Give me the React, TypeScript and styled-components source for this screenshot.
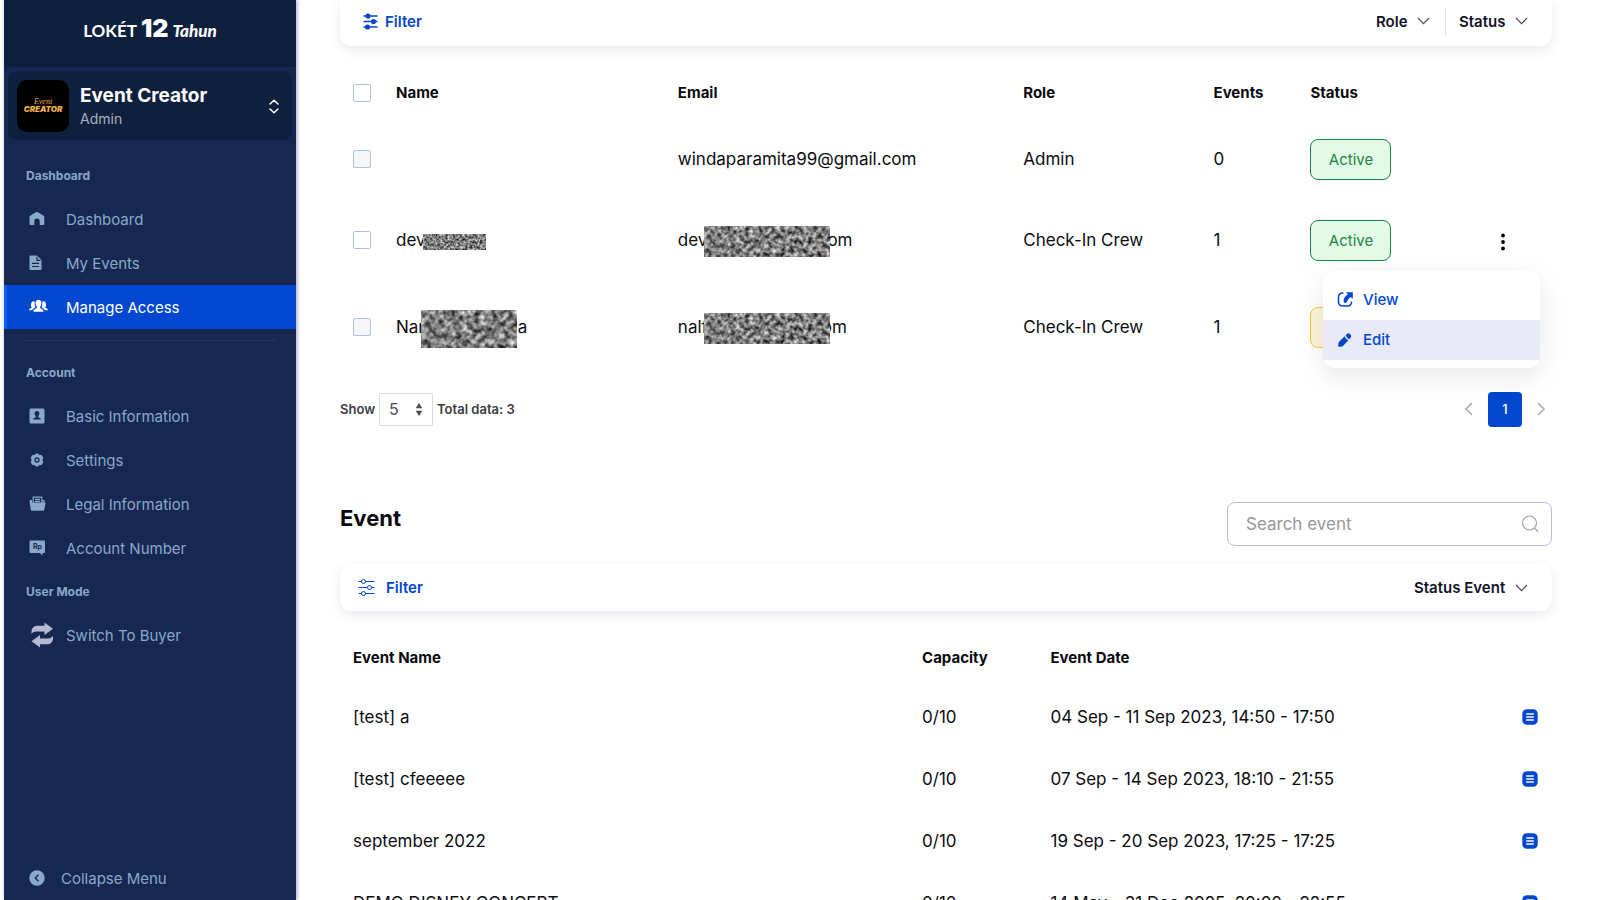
import React from "react";
import styled, { createGlobalStyle } from "styled-components";

const blue = "#0147cf";
const steel = "#8aa8c8";

const GlobalStyle = createGlobalStyle`
  *, *::before, *::after { box-sizing: border-box; }
  body {
    margin: 0;
    background: #fff;
    color: #0b0b0f;
    font-family: Inter, "Liberation Sans", sans-serif;
    font-size: 17px;
  }
  button, input, select { font: inherit; color: inherit; }
  button { border: 0; padding: 0; background: none; cursor: pointer; }
  a { color: inherit; text-decoration: none; }
  svg { display: block; }
`;

const Shell = styled.div`
  display: flex;
  height: 100vh;
  padding-left: 4px;
  overflow: hidden;
`;

/* ---------- Sidebar ---------- */

const Sidebar = styled.aside`
  display: flex;
  flex-direction: column;
  flex: 0 0 292px;
  background: #162852;
  color: ${steel};
  box-shadow: 1px 0 4px rgba(20, 30, 60, 0.4);
`;

const Brand = styled.a`
  display: flex;
  align-items: baseline;
  justify-content: center;
  gap: 4px;
  height: 67px;
  padding-top: 13px;
  background: #0f203f;
  color: #fff;
  line-height: 30px;
`;

const BrandName = styled.span`
  font-family: Lato, sans-serif;
  font-size: 17px;
  font-weight: 700;
`;

const BrandAge = styled.span`
  font-size: 25px;
  font-weight: 900;
`;

const BrandYears = styled.span`
  font-family: Lato, sans-serif;
  font-size: 17px;
  font-style: italic;
  font-weight: 900;
`;

const Profile = styled.button`
  display: flex;
  align-items: center;
  gap: 11px;
  height: 69px;
  margin: 4px 4px 0;
  padding: 0 12px 0 9px;
  border-radius: 9px;
  background: #0f203f;
  color: #fff;
  text-align: left;
`;

const Avatar = styled.span`
  display: flex;
  flex-direction: column;
  align-items: center;
  justify-content: center;
  flex: none;
  width: 52px;
  height: 52px;
  border-radius: 10px;
  background: #000;
  color: #f0ad4e;
`;

const AvatarTop = styled.span`
  font-family: "Liberation Serif", serif;
  font-size: 8px;
  font-style: italic;
  line-height: 7px;
`;

const AvatarBottom = styled.span`
  font-size: 8px;
  font-style: italic;
  font-weight: 900;
  line-height: 8px;
`;

const ProfileText = styled.span`
  display: flex;
  flex: 1;
  flex-direction: column;
  padding-top: 2px;
`;

const ProfileName = styled.span`
  font-size: 19px;
  font-weight: 700;
  line-height: 24px;
`;

const ProfileRole = styled.span`
  color: #a9b1bf;
  font-size: 14px;
  line-height: 22px;
`;

const Nav = styled.nav`
  display: flex;
  flex: 1;
  flex-direction: column;
`;

const NavLabel = styled.h2<{ $top: number }>`
  margin: ${(p) => p.$top}px 0 0;
  padding-left: 22px;
  font-size: 12px;
  font-weight: 700;
  line-height: 20px;
`;

const NavList = styled.ul<{ $top: number }>`
  margin: ${(p) => p.$top}px 0 0;
  padding: 0;
  list-style: none;
`;

const NavLink = styled.a<{ $active?: boolean }>`
  display: grid;
  grid-template-columns: 37px 1fr;
  align-items: center;
  height: 44px;
  padding-left: 22px;
  border-left: 3px solid ${(p) => (p.$active ? "#0a60ff" : "transparent")};
  background: ${(p) => (p.$active ? blue : "transparent")};
  color: ${(p) => (p.$active ? "#fff" : "inherit")};
  font-size: 15px;
`;

const Divider = styled.hr`
  width: 249px;
  margin: 11px 0 0 22px;
  border: 0;
  border-top: 1px solid #24365f;
`;

const Collapse = styled.button`
  display: flex;
  align-items: center;
  gap: 16px;
  height: 44px;
  padding-left: 22px;
  border-left: 3px solid transparent;
  font-size: 15px;
`;

/* ---------- Main column ---------- */

const Main = styled.main`
  flex: 1;
  min-width: 0;
  padding: 0 48px 0 44px;
`;

const FilterBar = styled.div<{ $docked?: boolean }>`
  display: flex;
  align-items: center;
  justify-content: space-between;
  height: ${(p) => (p.$docked ? 46 : 47)}px;
  margin-top: ${(p) => (p.$docked ? 0 : 18)}px;
  padding: ${(p) => (p.$docked ? "0 24px 4px 22px" : "0 24px 0 18px")};
  border-radius: ${(p) => (p.$docked ? "0 0 12px 12px" : "12px")};
  background: #fff;
  box-shadow: 0 4px 12px rgba(30, 40, 90, 0.1);
  font-size: 15px;
  font-weight: 600;
`;

const FilterButton = styled.button<{ $gap: number }>`
  display: flex;
  align-items: center;
  gap: ${(p) => p.$gap}px;
  color: ${blue};
  font-weight: 600;
`;

const FilterGroup = styled.div`
  display: flex;
  align-items: center;
`;

const SelectWrap = styled.label`
  display: flex;
  align-items: center;
  gap: 9px;
  color: #10142b;

  & + & {
    margin-left: 15px;
    padding: 4px 0 4px 13px;
    border-left: 1px solid #dde1ec;
  }
`;

const PlainSelect = styled.select`
  border: 0;
  padding: 0;
  appearance: none;
  background: none;
  font-weight: 600;
`;

const Table = styled.table<{ $top: number }>`
  width: 100%;
  margin-top: ${(p) => p.$top}px;
  border-collapse: collapse;
  table-layout: fixed;
`;

const Col = styled.col<{ $width?: string }>`
  width: ${(p) => p.$width ?? "auto"};
`;

const Row = styled.tr<{ $height: number }>`
  height: ${(p) => p.$height}px;
`;

const Th = styled.th`
  padding: 0 0 0 13px;
  font-size: 15px;
  font-weight: 700;
  text-align: left;
  white-space: nowrap;
`;

const Td = styled.td`
  padding: 0 0 0 13px;
  white-space: nowrap;
`;

const Check = styled.input<{ $muted?: boolean }>`
  display: block;
  width: 18px;
  height: 18px;
  margin: 0;
  border: 1px solid #b3bfd8;
  border-radius: 2px;
  appearance: none;
  background: ${(p) => (p.$muted ? "#f6f6f7" : "#fff")};
`;

const Masked = styled.span`
  display: flex;
  align-items: center;
`;

const NoiseBox = styled.svg<{ $left: number; $right: number }>`
  flex: none;
  margin: 3px ${(p) => -p.$right}px 0 ${(p) => -p.$left}px;
  z-index: 1;
`;

const StatusCell = styled.div`
  position: relative;
  display: flex;
  align-items: center;
  justify-content: space-between;
  padding-right: 39px;
`;

const Badge = styled.span<{ $pending?: boolean }>`
  display: flex;
  align-items: center;
  justify-content: center;
  width: 81px;
  height: 41px;
  border: 1px solid ${(p) => (p.$pending ? "#f7c52d" : "#1c8540")};
  border-radius: 8px;
  background: ${(p) => (p.$pending ? "#fdf5da" : "#e4f9e7")};
  color: #1c8540;
  font-size: 15px;
`;

const KebabButton = styled.button`
  padding-top: 3px;
`;

const Menu = styled.div`
  position: absolute;
  z-index: 2;
  top: 51px;
  right: 12px;
  width: 217px;
  padding: 9px 0 8px;
  border-radius: 12px;
  background: #fff;
  box-shadow: 0 8px 28px rgba(20, 20, 40, 0.1);
`;

const MenuItem = styled.button<{ $hover?: boolean }>`
  display: grid;
  grid-template-columns: 26px 1fr;
  align-items: center;
  width: 100%;
  height: 40px;
  padding-left: 14px;
  background: ${(p) => (p.$hover ? "#e8ebf7" : "transparent")};
  color: ${blue};
  font-size: 15px;
  font-weight: 500;
  text-align: left;
`;

const Footer = styled.div`
  display: flex;
  align-items: center;
  justify-content: space-between;
  height: 36px;
  margin-top: 19px;
  color: #3b3c42;
  font-size: 13px;
  font-weight: 600;
`;

const PageSize = styled.label`
  display: flex;
  align-items: center;
  gap: 4px;
`;

const SizeBox = styled.span`
  display: grid;
  grid-template-columns: 1fr 8px;
  align-items: center;
  width: 54px;
  height: 33px;
  padding: 0 9px;
  border: 1px solid #dcdde2;
  color: #4b4c52;
`;

const SizeSelect = styled.select`
  border: 0;
  padding: 0;
  appearance: none;
  background: none;
  font-size: 16px;
  font-weight: 400;
`;

const Pager = styled.div`
  display: flex;
  align-items: center;
  gap: 15px;
  padding-right: 6px;
  color: #a3a9b8;
`;

const PageNumber = styled.button`
  width: 34px;
  height: 35px;
  border-radius: 4px;
  background: ${blue};
  color: #fff;
  font-weight: 500;
`;

const SectionHead = styled.header`
  display: flex;
  align-items: flex-start;
  justify-content: space-between;
  margin-top: 75px;
`;

const SectionTitle = styled.h1`
  margin: 0;
  font-size: 22px;
  font-weight: 700;
  line-height: 32px;
`;

const SearchBox = styled.label`
  display: flex;
  align-items: center;
  width: 325px;
  height: 44px;
  padding: 0 12px 0 18px;
  border: 1px solid #b7bfd6;
  border-radius: 8px;
  color: #a0a0a4;
`;

const SearchInput = styled.input`
  flex: 1;
  min-width: 0;
  border: 0;
  padding: 0;
  outline: 0;
  background: none;
  font-size: 17px;

  &::placeholder { color: #97979b; opacity: 1; }
`;

const DetailButton = styled.button`
  display: block;
  margin-left: auto;
  margin-right: 14px;
`;

/* ---------- Icons ---------- */

const HomeIcon = () => (
  <svg width="16" height="16" viewBox="0 0 16 16" fill="currentColor">
    <path d="M1.500 4.600 6.800 1.300a2 2 0 0 1 2.200 0l5.300 3.300a2 2 0 0 1 1 1.700V13a1 1 0 0 1-1 1h-3.600v-3.700a2.700 2.700 0 0 0-5.400 0V14H1.500a1 1 0 0 1-1-1V6.300a2 2 0 0 1 1-1.700z" />
  </svg>
);

const DocIcon = () => (
  <svg width="16" height="16" viewBox="0 0 16 16">
    <path fill="currentColor" d="M1.500 .5H8l4.500 4.500v9a1 1 0 0 1-1 1h-10a1 1 0 0 1-1-1v-12.500a1 1 0 0 1 1-1z" />
    <path fill="none" stroke="#162852" strokeWidth="1.200" d="M8 1.800V5.300h3.500M3 8.400h7M3 11.500h7" />
  </svg>
);

const PeopleIcon = () => (
  <svg width="19" height="16" viewBox="0 0 19 16" fill="currentColor">
    <path d="M4.300 2.200c.7 0 1.200.3 1.500.8-.4 1.700-.2 3.700.7 4.900-.6 1.500-2.900 1.300-3.300 3.300H0c0-2 2.200-1.900 2.700-3C1.500 7.200 1.700 2.200 4.300 2.200zM14.700 2.200c-.7 0-1.200.3-1.500.8.4 1.700.2 3.700-.7 4.900.6 1.500 2.900 1.300 3.300 3.300H19c0-2-2.200-1.900-2.700-3 1.200-1 1-6-1.600-6z" />
    <path d="M9.500 .8c2 0 3 1.400 3 3.300 0 1.500-.5 2.700-1.300 3.400v1.200c.6 1.300 3.400 1.200 3.400 4.100H4.400c0-2.900 2.800-2.800 3.400-4.100V7.500C7 6.800 6.500 5.600 6.500 4.100 6.500 2.200 7.500 .8 9.500 .8z" />
  </svg>
);

const ContactIcon = () => (
  <svg width="16" height="16" viewBox="0 0 16 16">
    <rect x=".5" y=".5" width="15" height="15" rx="1.500" fill="currentColor" />
    <path fill="#162852" d="M8 3c1.600 0 2.400 1 2.400 2.400 0 1-.4 1.900-1.100 2.400v1.400c.5.500 2.700.5 2.700 2.300H4c0-1.800 2.200-1.800 2.700-2.300V7.800C6 7.300 5.600 6.400 5.600 5.400 5.600 4 6.400 3 8 3z" />
  </svg>
);

const GearIcon = () => (
  <svg width="16" height="16" viewBox="0 0 16 16">
    <path fill="currentColor" stroke="currentColor" strokeLinejoin="round" d="M6.600 2h2.800l.6 1.600 2.400-.2 1.400 2.400L12.900 8l.9 2.200-1.400 2.400-2.400-.2-.6 1.600H6.600L6 12.400l-2.400.2-1.400-2.400L3.100 8l-.9-2.200 1.400-2.400 2.400.2z" />
    <circle cx="8" cy="8" r="2" fill="none" stroke="#162852" strokeWidth="1.300" />
  </svg>
);

const FolderIcon = () => (
  <svg width="17" height="16" viewBox="0 0 17 16">
    <path fill="currentColor" d="M2.200 6.500h13.400a.9 .9 0 0 1 .9 1.100l-1.300 6.400a1 1 0 0 1-1 .8H2.800a1 1 0 0 1-1-.8L.5 5a1 1 0 0 1 1-1H3v2.500z" />
    <path fill="none" stroke="currentColor" strokeWidth="1.200" d="M4.200 7V1.200h8.600V7M15 7V4.600h-2M6 3.300h5M6 5.300h5" />
  </svg>
);

const AccountNumberIcon = () => (
  <svg width="17" height="16" viewBox="0 0 17 16">
    <path fill="currentColor" d="M1.500 .5h13.500a1 1 0 0 1 1 1V12a1 1 0 0 1-1 1h-1.500v2.500L11 13H1.500a1 1 0 0 1-1-1V1.500a1 1 0 0 1 1-1z" />
    <text x="4" y="9" fontSize="7" fontWeight="700" fill="#162852">Rp</text>
  </svg>
);

const SwitchIcon = () => (
  <svg width="26" height="28" viewBox="0 0 26 28" fill="#b4b9cf">
    <path d="M2.500 13V10A5.500 5.500 0 0 1 8 4.800h7.500V1.500l8.500 6.300-8.500 6.200v-3.400H7.500c-2.200 0-3.700.8-5 2.400zM24 15v3a5.500 5.500 0 0 1-5.500 5.200H11v3.300l-8.500-6.300L11 14v3.400h8c2.200 0 3.700-.8 5-2.400z" />
  </svg>
);

const CollapseIcon = () => (
  <svg width="16" height="16" viewBox="0 0 16 16">
    <circle cx="8" cy="8" r="7.700" fill="currentColor" />
    <path d="M9.500 4.800 6.300 8l3.200 3.200" fill="none" stroke="#162852" strokeWidth="1.400" />
  </svg>
);

const UpDownIcon = () => (
  <svg width="12" height="16" viewBox="0 0 12 16" fill="none" stroke="#fff" strokeWidth="1.500" strokeLinecap="round" strokeLinejoin="round">
    <path d="M2 6 6 2.300 10 6M2 11l4 3.700 4-3.700" />
  </svg>
);

const SolidSlidersIcon = () => (
  <svg width="17" height="17" viewBox="0 0 17 17" stroke="currentColor" strokeWidth="1.500" fill="currentColor">
    <path d="M1.500 3h14M1.500 8.500h14M1.500 14h14" />
    <circle cx="6" cy="3" r="1.800" />
    <circle cx="11.500" cy="8.500" r="1.800" />
    <circle cx="5.500" cy="14" r="1.800" />
  </svg>
);

const OutlineSlidersIcon = () => (
  <svg width="17" height="17" viewBox="0 0 17 17" stroke="currentColor" fill="none">
    <path d="M.5 2.500H3.500M7.500 2.500h9M.5 8.500h9M13.500 8.500h3M.5 14.500H3.500M7.500 14.500h9" />
    <circle cx="5.500" cy="2.500" r="2" />
    <circle cx="11.500" cy="8.500" r="2" />
    <circle cx="5.500" cy="14.500" r="2" />
  </svg>
);

const ChevronDown = () => (
  <svg width="13" height="8" viewBox="0 0 13 8" fill="none" stroke="#4a4f68" strokeWidth="1.200">
    <path d="m1 1 5.500 5.700L12 1" />
  </svg>
);

const ChevronSide = ({ right }: { right?: boolean }) => (
  <svg width="9" height="14" viewBox="0 0 9 14" fill="none" stroke="currentColor" strokeWidth="1.500">
    <path d={right ? "m1 1 6 6-6 6" : "M8 1 2 7l6 6"} />
  </svg>
);

const SortArrows = () => (
  <svg width="8" height="13" viewBox="0 0 8 13" fill="currentColor">
    <path d="m4 0 3.300 5.300H.7zM4 13 .7 7.700h6.600z" />
  </svg>
);

const KebabIcon = () => (
  <svg width="20" height="18" viewBox="0 0 20 18" fill="#000">
    <circle cx="10" cy="2.500" r="1.900" />
    <circle cx="10" cy="9" r="1.900" />
    <circle cx="10" cy="15.500" r="1.900" />
  </svg>
);

const ViewIcon = () => (
  <svg width="17" height="17" viewBox="0 0 17 17">
    <path fill="none" stroke="currentColor" strokeWidth="1.500" d="M6.500 2H5.300A3.800 3.800 0 0 0 1.500 5.800v5.400A3.800 3.800 0 0 0 5.300 15h5.400a3.800 3.800 0 0 0 3.800-3.800V10.500" />
    <path fill="currentColor" d="M8.800 1.200h7v6.600l-2-1.900C11.500 7.500 10.500 9 9.500 11.800H7.200C5.800 8.500 7.500 5.500 10.900 3.200z" />
  </svg>
);

const EditIcon = () => (
  <svg width="16" height="16" viewBox="0 0 16 16" fill="currentColor">
    <path d="M7.600 4.200C8.500 6 9.500 7.200 11.300 8.200l-4.800 5.400a2.500 2.500 0 0 1-1.500.8l-2.700.4a1 1 0 0 1-1.100-1.100l.2-2.300a2.500 2.500 0 0 1 .7-1.600zM8.700 3.200l1.400-1.400a2 2 0 0 1 2.600 0l1 1a2 2 0 0 1 0 2.600L12.200 7.200C10.500 6.300 9.500 5 8.700 3.200z" />
  </svg>
);

const SearchIcon = () => (
  <svg width="18" height="18" viewBox="0 0 18 18" fill="none" stroke="currentColor" strokeWidth="1.200" strokeLinecap="round">
    <circle cx="8.500" cy="8" r="7" />
    <path d="m13.700 13.200 3 3.300" />
  </svg>
);

const DetailIcon = () => (
  <svg width="16" height="16" viewBox="0 0 16 16">
    <rect x=".3" y=".3" width="15.400" height="15.400" rx="4.500" fill={blue} />
    <path d="M4.200 5h7.600M4.200 8h7.600M4.200 11h7.600" stroke="#fff" strokeWidth="1.300" />
  </svg>
);

type NoiseProps = { id: string; width: number; height: number; grain: number; left?: number; right?: number };

const Noise = ({ id, width, height, grain, left = 0, right = 0 }: NoiseProps) => (
  <NoiseBox width={width} height={height} $left={left} $right={right} aria-hidden="true">
    <filter id={id} x="0" y="0" width="100%" height="100%" colorInterpolationFilters="sRGB">
      <feTurbulence type="fractalNoise" baseFrequency={grain} numOctaves={2} seed={7} />
      <feColorMatrix values="1.300 0 0 0 -0.160  1.300 0 0 0 -0.160  1.300 0 0 0 -0.160  0 0 0 0 1" />
    </filter>
    <rect width={width} height={height} filter={`url(#${id})`} />
  </NoiseBox>
);

/* ---------- Page ---------- */

const events = [
  ["[test] a", "0/10", "04 Sep - 11 Sep 2023, 14:50 - 17:50"],
  ["[test] cfeeeee", "0/10", "07 Sep - 14 Sep 2023, 18:10 - 21:55"],
  ["september 2022", "0/10", "19 Sep - 20 Sep 2023, 17:25 - 17:25"],
  ["DEMO DISNEY CONCEPT", "0/10", "14 May - 31 Dec 2025, 20:00 - 22:55"],
];

const FilterSelect = ({ label }: { label: string }) => (
  <SelectWrap>
    <PlainSelect aria-label={label} defaultValue="">
      <option value="">{label}</option>
    </PlainSelect>
    <ChevronDown />
  </SelectWrap>
);

const NavItem = ({ icon, label, active }: { icon: React.ReactNode; label: string; active?: boolean }) => (
  <li>
    <NavLink href="#" $active={active} aria-current={active ? "page" : undefined}>
      {icon}
      {label}
    </NavLink>
  </li>
);

export default function App() {
  return (
    <>
      <GlobalStyle />
      <Shell>
        <Sidebar>
          <Brand href="#">
            <BrandName>LOKÉT</BrandName>
            <BrandAge>12</BrandAge>
            <BrandYears>Tahun</BrandYears>
          </Brand>
          <Profile type="button">
            <Avatar>
              <AvatarTop>Event</AvatarTop>
              <AvatarBottom>CREATOR</AvatarBottom>
            </Avatar>
            <ProfileText>
              <ProfileName>Event Creator</ProfileName>
              <ProfileRole>Admin</ProfileRole>
            </ProfileText>
            <UpDownIcon />
          </Profile>
          <Nav>
            <NavLabel $top={26}>Dashboard</NavLabel>
            <NavList $top={11}>
              <NavItem icon={<HomeIcon />} label="Dashboard" />
              <NavItem icon={<DocIcon />} label="My Events" />
              <NavItem icon={<PeopleIcon />} label="Manage Access" active />
            </NavList>
            <Divider />
            <NavLabel $top={22}>Account</NavLabel>
            <NavList $top={11}>
              <NavItem icon={<ContactIcon />} label="Basic Information" />
              <NavItem icon={<GearIcon />} label="Settings" />
              <NavItem icon={<FolderIcon />} label="Legal Information" />
              <NavItem icon={<AccountNumberIcon />} label="Account Number" />
            </NavList>
            <NavLabel $top={12}>User Mode</NavLabel>
            <NavList $top={11}>
              <NavItem icon={<SwitchIcon />} label="Switch To Buyer" />
            </NavList>
          </Nav>
          <Collapse type="button">
            <CollapseIcon />
            Collapse Menu
          </Collapse>
        </Sidebar>

        <Main>
          <FilterBar $docked>
            <FilterButton type="button" $gap={6}>
              <SolidSlidersIcon />
              Filter
            </FilterButton>
            <FilterGroup>
              <FilterSelect label="Role" />
              <FilterSelect label="Status" />
            </FilterGroup>
          </FilterBar>

          <Table $top={19}>
            <colgroup>
              <Col $width="43px" />
              <Col />
              <Col $width="28.5%" />
              <Col $width="15.7%" />
              <Col $width="8%" />
              <Col $width="21%" />
            </colgroup>
            <thead>
              <Row $height={55}>
                <Th><Check type="checkbox" aria-label="Select all" /></Th>
                <Th>Name</Th>
                <Th>Email</Th>
                <Th>Role</Th>
                <Th>Events</Th>
                <Th>Status</Th>
              </Row>
            </thead>
            <tbody>
              <Row $height={78}>
                <Td><Check type="checkbox" aria-label="Select row 1" $muted disabled /></Td>
                <Td />
                <Td>windaparamita99@gmail.com</Td>
                <Td>Admin</Td>
                <Td>0</Td>
                <Td>
                  <StatusCell><Badge>Active</Badge></StatusCell>
                </Td>
              </Row>
              <Row $height={84}>
                <Td><Check type="checkbox" aria-label="Select row 2" /></Td>
                <Td>
                  <Masked>dev<Noise id="grain-a" width={63} height={16} grain={0.4} left={3} /></Masked>
                </Td>
                <Td>
                  <Masked>dev<Noise id="grain-b" width={126} height={31} grain={0.22} left={3} right={3} />om</Masked>
                </Td>
                <Td>Check-In Crew</Td>
                <Td>1</Td>
                <Td>
                  <StatusCell>
                    <Badge>Active</Badge>
                    <KebabButton type="button" aria-label="Row actions"><KebabIcon /></KebabButton>
                    <Menu>
                      <MenuItem type="button"><ViewIcon />View</MenuItem>
                      <MenuItem type="button" $hover><EditIcon />Edit</MenuItem>
                    </Menu>
                  </StatusCell>
                </Td>
              </Row>
              <Row $height={90}>
                <Td><Check type="checkbox" aria-label="Select row 3" $muted disabled /></Td>
                <Td>
                  <Masked>Nar<Noise id="grain-c" width={96} height={38} grain={0.17} left={4} right={-1} />a</Masked>
                </Td>
                <Td>
                  <Masked>nalf<Noise id="grain-d" width={126} height={31} grain={0.22} left={4} right={8} />om</Masked>
                </Td>
                <Td>Check-In Crew</Td>
                <Td>1</Td>
                <Td>
                  <StatusCell><Badge $pending /></StatusCell>
                </Td>
              </Row>
            </tbody>
          </Table>

          <Footer>
            <PageSize>
              Show
              <SizeBox>
                <SizeSelect aria-label="Rows per page" defaultValue="5">
                  <option>5</option>
                </SizeSelect>
                <SortArrows />
              </SizeBox>
              <span>Total data: 3</span>
            </PageSize>
            <Pager>
              <button type="button" aria-label="Previous page"><ChevronSide /></button>
              <PageNumber type="button">1</PageNumber>
              <button type="button" aria-label="Next page"><ChevronSide right /></button>
            </Pager>
          </Footer>

          <SectionHead>
            <SectionTitle>Event</SectionTitle>
            <SearchBox>
              <SearchInput type="text" placeholder="Search event" aria-label="Search event" />
              <SearchIcon />
            </SearchBox>
          </SectionHead>

          <FilterBar>
            <FilterButton type="button" $gap={11}>
              <OutlineSlidersIcon />
              Filter
            </FilterButton>
            <FilterGroup>
              <FilterSelect label="Status Event" />
            </FilterGroup>
          </FilterBar>

          <Table $top={17}>
            <colgroup>
              <Col />
              <Col $width="10.6%" />
              <Col $width="37.5%" />
              <Col $width="60px" />
            </colgroup>
            <thead>
              <Row $height={58}>
                <Th>Event Name</Th>
                <Th>Capacity</Th>
                <Th>Event Date</Th>
                <Th />
              </Row>
            </thead>
            <tbody>
              {events.map(([name, capacity, date]) => (
                <Row $height={62} key={name}>
                  <Td>{name}</Td>
                  <Td>{capacity}</Td>
                  <Td>{date}</Td>
                  <Td>
                    <DetailButton type="button" aria-label={`Details of ${name}`}><DetailIcon /></DetailButton>
                  </Td>
                </Row>
              ))}
            </tbody>
          </Table>
        </Main>
      </Shell>
    </>
  );
}
